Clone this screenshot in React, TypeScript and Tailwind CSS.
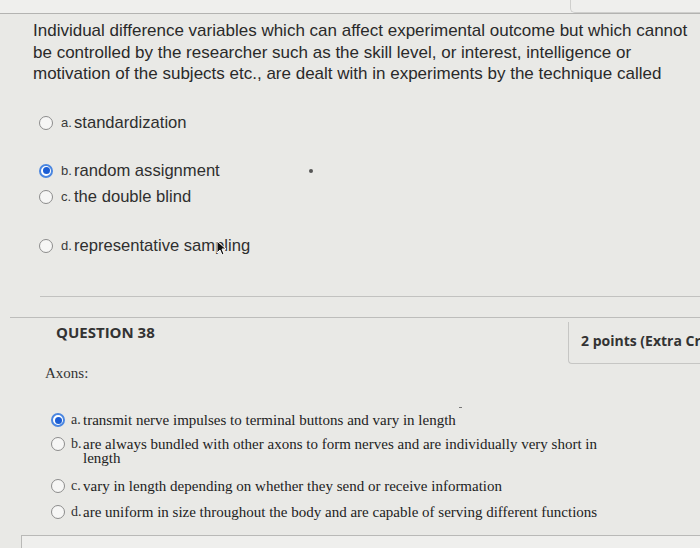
import React from "react";

function Radio({ checked }: { checked?: boolean }) {
  if (checked) {
    return (
      <span className="flex h-[14px] w-[14px] shrink-0 items-center justify-center rounded-full border-2 border-[#4a86e0] bg-white">
        <span className="h-[7px] w-[7px] rounded-full bg-[#1c5ed4]" />
      </span>
    );
  }
  return <span className="h-[14px] w-[14px] shrink-0 rounded-full border border-[#8c8c8c] bg-[#f6f6f5]" />;
}

function SansOption({ label, text, checked }: { label: string; text: string; checked?: boolean }) {
  return (
    <div className="flex items-center">
      <Radio checked={checked} />
      <span className="ml-[8px] w-[12px] text-[13px] text-[#3a3a3a]">{label}</span>
      <span className="ml-[1px] text-[16.6px] leading-[24px] text-[#2f2f2f]">{text}</span>
    </div>
  );
}

function SerifOption({ label, text, checked }: { label: string; text: string; checked?: boolean }) {
  return (
    <div className="flex items-start">
      <div className="flex h-[18px] items-center">
        <Radio checked={checked} />
      </div>
      <span className="ml-[6px] w-[12px] text-[14px] leading-[18px] text-[#333]">{label}</span>
      <span className="w-[525px] pt-[2px] text-[15px] leading-[14px] text-[#222]">{text}</span>
    </div>
  );
}

export default function App() {
  return (
    <div className="relative h-[548px] w-[700px] overflow-hidden bg-[#e9e9e6] font-['Liberation_Sans',Arial,sans-serif]">
      {/* end of previous question */}
      <div className="flex h-[14px] border-b border-[#b3b3b1] bg-[#efefed]">
        <div className="ml-auto h-full w-[130px] rounded-bl-[5px] border-b border-l border-[#cfcfcd]" />
      </div>

      <p className="pl-[33px] pr-[10px] pt-[6px] text-[17px] leading-[21.5px] text-[#2a2a2a]">
        Individual difference variables which can affect experimental outcome but which cannot be controlled by the
        researcher such as the skill level, or interest, intelligence or motivation of the subjects etc., are dealt
        with in experiments by the technique called
      </p>

      <div className="pl-[39px]">
        <div className="mt-[26px]">
          <SansOption label="a." text="standardization" />
        </div>
        <div className="mt-[24px]">
          <SansOption label="b." text="random assignment" checked />
        </div>
        <div className="mt-[2px]">
          <SansOption label="c." text="the double blind" />
        </div>
        <div className="mt-[25px]">
          <SansOption label="d." text="representative sampling" />
        </div>
      </div>

      <div className="ml-[40px] mt-[38px] border-t border-[#c2c2c0]" />
      <div className="ml-[10px] mt-[20px] border-t border-[#bdbdbb]" />

      {/* question 38 */}
      <div className="flex items-start">
        <div className="pl-[56px] pt-[3px] font-['Open_Sans',sans-serif] text-[15px] font-bold text-[#333]">
          QUESTION 38
        </div>
        <div className="ml-auto mt-[4px] h-[42px] w-[132px] rounded-bl-[4px] border-b border-l border-[#c6c6c4] pl-[12px] pt-[8px] whitespace-nowrap font-['Open_Sans',sans-serif] text-[14px] font-bold text-[#333]">
          2 points (Extra Cr
        </div>
      </div>

      <div className="font-['Liberation_Serif','Times_New_Roman',serif]">
        <p className="-mt-[2px] pl-[45px] text-[15px] text-[#333]">Axons:</p>

        <div className="mt-[27px] flex flex-col pl-[51px]">
          <SerifOption label="a." text="transmit nerve impulses to terminal buttons and vary in length" checked />
          <div className="mt-[6px]">
            <SerifOption
              label="b."
              text="are always bundled with other axons to form nerves and are individually very short in length"
            />
          </div>
          <div className="mt-[12px]">
            <SerifOption label="c." text="vary in length depending on whether they send or receive information" />
          </div>
          <div className="mt-[8px]">
            <SerifOption
              label="d."
              text="are uniform in size throughout the body and are capable of serving different functions"
            />
          </div>
        </div>
      </div>

      <div className="ml-[21px] mt-[14px] h-[40px] border-l border-t border-[#b9b9b7] bg-[#efefed]" />

      {/* mouse pointer and specks from the photo */}
      <svg className="absolute left-[216px] top-[240px]" width="11" height="16" viewBox="0 0 11 16">
        <path d="M1 1 L1 13 L4 10 L6 15 L8 14 L6 9 L10 9 Z" fill="#111" stroke="#fff" strokeWidth="1" />
      </svg>
      <span className="absolute left-[309px] top-[169px] h-[4px] w-[4px] rounded-full bg-[#555]" />
      <span className="absolute left-[459px] top-[407px] h-[1px] w-[3px] bg-[#777]" />
    </div>
  );
}
